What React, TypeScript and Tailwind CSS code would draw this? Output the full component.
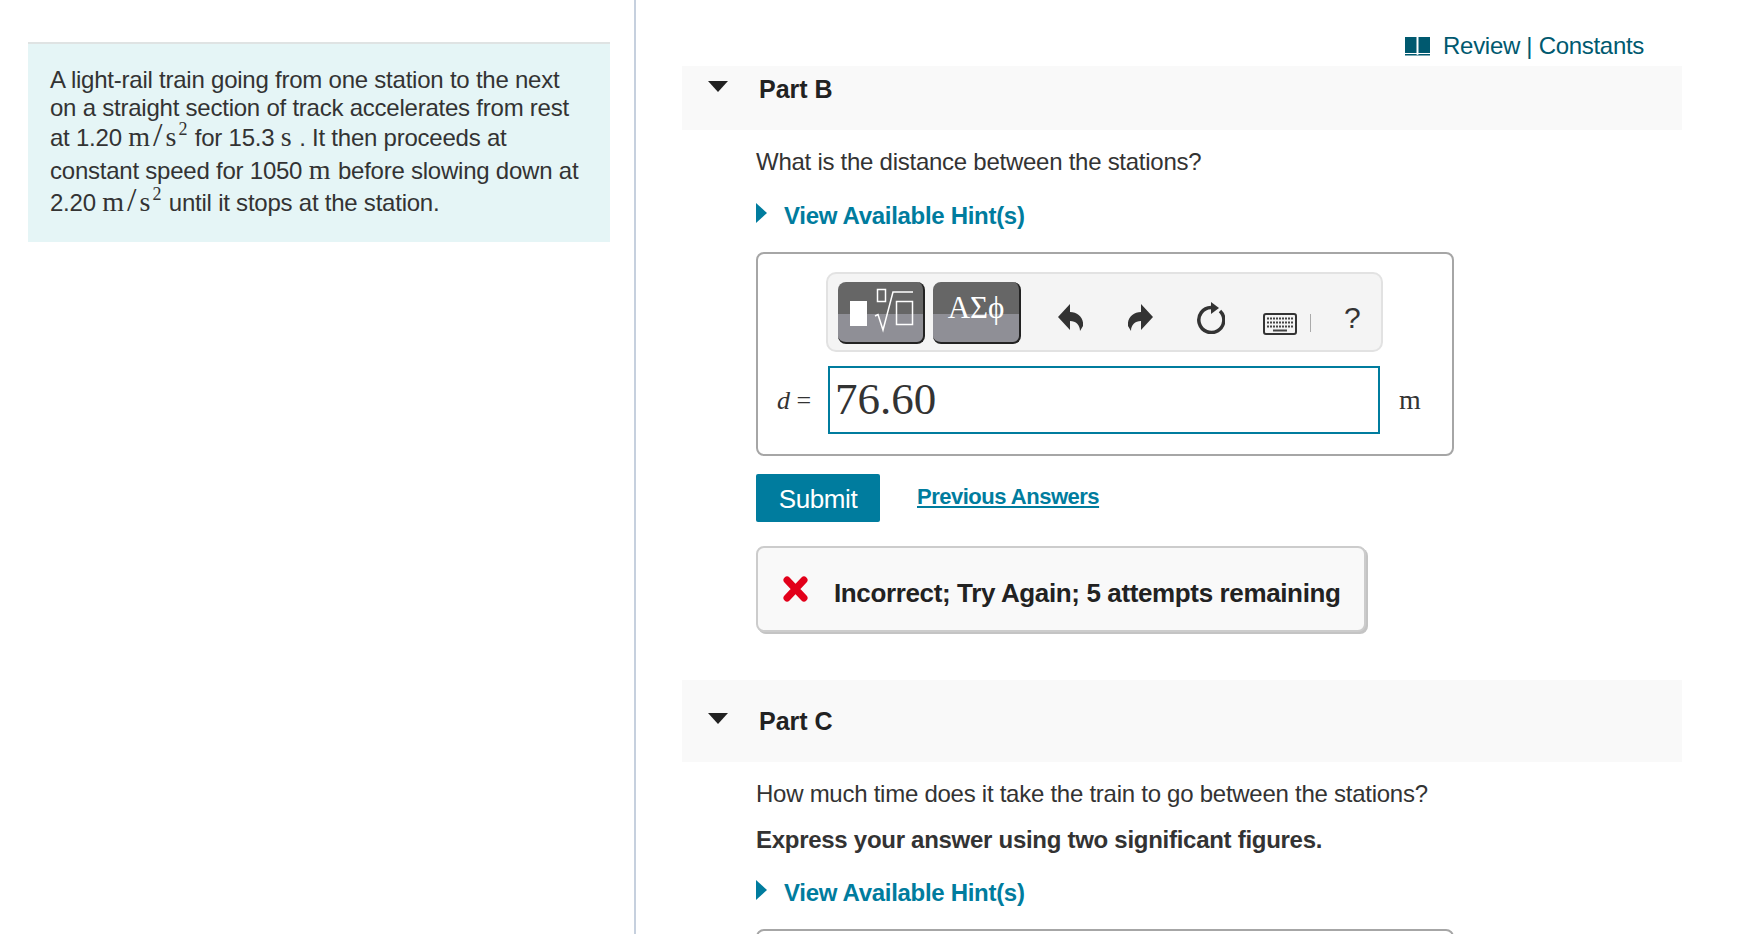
import React from "react";

const sans = "font-['Liberation_Sans',Arial,sans-serif]";
const math = "font-['Liberation_Serif','Times_New_Roman',serif]";
const toolBtn =
  "rounded-[8px] border-r-2 border-b-2 border-[#222] bg-[linear-gradient(#666_0,#666_54%,#8f8f96_54%,#8f8f96_100%)]";

function Unit({ children }: { children: React.ReactNode }) {
  return <span className={`${math} text-[28px] leading-[0] tracking-[1px]`}>{children}</span>;
}

function PerSquare() {
  return (
    <Unit>
      m<span className="mx-[2px] text-[34px] leading-[0] font-light">/</span>s
      <sup className="relative -top-[11px] ml-[1px] align-baseline text-[18px] leading-[0]">2</sup>
    </Unit>
  );
}

function DownCaret() {
  return (
    <svg width="20" height="12" viewBox="0 0 20 12" className="shrink-0">
      <path d="M0 1h20L10 12z" fill="#222" />
    </svg>
  );
}

function Hint() {
  return (
    <div className="flex items-center gap-[17px]">
      <svg width="11" height="20" viewBox="0 0 11 20" className="-mt-[6px] shrink-0">
        <path d="M0 0l11 10L0 20z" fill="#007c9e" />
      </svg>
      <a className="text-[24px] leading-[30px] font-bold tracking-[-0.3px] text-[#007c9e]">View Available Hint(s)</a>
    </div>
  );
}

function PartHeader({ name, height }: { name: string; height: string }) {
  return (
    <div className={`flex items-start gap-[31px] bg-[#f9f9f9] pl-[26px] ${height}`}>
      <div className="mt-[14px]">
        <DownCaret />
      </div>
      <h2 className="mt-[7px] text-[25px] leading-[32px] font-bold text-[#222]">{name}</h2>
    </div>
  );
}

function Toolbar() {
  return (
    <div className="ml-[68px] flex h-[80px] w-[557px] items-start rounded-[10px] border-2 border-[#e2e2e2] bg-[#f4f4f4] pl-[10px]">
      <button className={`mt-[8px] h-[62px] w-[87px] ${toolBtn}`}>
        <svg width="85" height="60" viewBox="0 0 85 60" className="block">
          <rect x="12" y="19" width="17" height="25" fill="#fff" />
          <rect x="39.500" y="7.500" width="8" height="12" fill="none" stroke="#fff" strokeWidth="1.5" />
          <path d="M37 34l3-1.500 5 15.500 10-38h20" fill="none" stroke="#fff" strokeWidth="1.5" />
          <rect x="58.500" y="19.500" width="16" height="23" fill="none" stroke="#fff" strokeWidth="1.5" />
        </svg>
      </button>
      <button className={`mt-[8px] ml-[8px] h-[62px] w-[88px] pb-[10px] text-[31px] leading-none text-white ${toolBtn} ${math}`}>
        ΑΣϕ
      </button>
      <svg width="25" height="27" viewBox="0 0 25 27" className="mt-[30px] ml-[37px]" fill="#333">
        <path d="M0 13L12 0v8c8 0 14 6 13 14l-3 5c0-6-4-10-10-10v9z" />
      </svg>
      <svg width="25" height="27" viewBox="0 0 25 27" className="mt-[30px] ml-[45px]" fill="#333">
        <path d="M25 13L13 0v8C5 8-1 14 0 22l3 5c0-6 4-10 10-10v9z" />
      </svg>
      <svg width="28" height="32" viewBox="0 0 28 32" className="mt-[28px] ml-[44px]" fill="none">
        <path d="M14 5.500A12.500 12.500 0 1 0 23 9" stroke="#333" strokeWidth="3.5" />
        <path d="M14 0l8 6-8 6z" fill="#333" />
      </svg>
      <svg width="34" height="22" viewBox="0 0 34 22" className="mt-[39px] ml-[38px]">
        <rect x="1" y="1" width="32" height="20" rx="2" fill="#f4f4f4" stroke="#333" strokeWidth="2" />
        <path d="M4 5.500h26M4 9.500h26M4 13.500h26" stroke="#444" strokeWidth="2" strokeDasharray="2 1" />
        <path d="M10 17.500h14" stroke="#444" strokeWidth="2" />
      </svg>
      <div className="mt-[40px] ml-[13px] h-[18px] w-px bg-[#aaa]" />
      <span className="mt-[26px] ml-[33px] text-[30px] leading-[36px] tracking-[-1px] text-[#333]">?</span>
    </div>
  );
}

function AnswerBox() {
  return (
    <div className="mt-[21px] h-[204px] w-[698px] rounded-[8px] border-2 border-[#a6a6a6] pt-[18px]">
      <Toolbar />
      <div className="mt-[14px] flex items-center">
        <span className={`ml-[19px] w-[51px] text-[26px] text-[#333] ${math}`}>
          <i>d</i> =
        </span>
        <div className={`flex h-[68px] w-[552px] items-center border-2 border-[#007c9e] pl-[5px] text-[45px] text-[#333] ${math}`}>
          76.60
        </div>
        <span className={`ml-[19px] text-[28px] text-[#333] ${math}`}>m</span>
      </div>
    </div>
  );
}

function Feedback() {
  return (
    <div className="mt-[24px] flex h-[86px] w-[610px] items-center rounded-[8px] border-2 border-[#ccc] bg-[#f9f9f9] pl-[25px] shadow-[2px_2px_0_#c4c4c4]">
      <svg width="25" height="26" viewBox="0 0 25 26" className="shrink-0">
        <path d="M4 4l17 18M21 4L4 22" stroke="#e2001a" strokeWidth="7" strokeLinecap="round" />
      </svg>
      <span className="mt-[8px] ml-[26px] text-[26px] font-bold tracking-[-0.37px] text-[#222]">
        Incorrect; Try Again; 5 attempts remaining
      </span>
    </div>
  );
}

export default function App() {
  return (
    <div className={`flex h-[934px] overflow-hidden bg-white ${sans} text-[#333]`}>
      <aside className="h-full w-[636px] shrink-0 border-r-2 border-[#c6d0de] pt-[42px] pl-[28px]">
        <div className="h-[200px] w-[582px] border-t-2 border-[#dfe3e3] bg-[#e5f5f6] px-[22px] pt-[22px] text-[24px] leading-[28px] tracking-[-0.23px] text-[#333]">
          <p>A light-rail train going from one station to the next</p>
          <p>on a straight section of track accelerates from rest</p>
          <p className="mt-[2px]">
            at 1.20 <PerSquare /> for 15.3 <Unit>s</Unit> . It then proceeds at
          </p>
          <p className="mt-[5px]">
            constant speed for 1050 <Unit>m</Unit> before slowing down at
          </p>
          <p className="mt-[4px]">
            2.20 <PerSquare /> until it stops at the station.
          </p>
        </div>
      </aside>

      <main className="min-w-0 flex-1 pl-[46px]">
        <div className="flex h-[66px] w-[1000px] justify-end pt-[31px] pr-[38px]">
          <div className="flex h-[30px] items-center gap-[13px] text-[24px] tracking-[-0.3px] text-[#00596f]">
            <svg width="25" height="19" viewBox="0 0 25 19">
              <path d="M0 0h11.500v16H0zM13.500 0H25v16H13.500zM0 17h11l1.500 1 1.500-1h11v1.500H0z" fill="#00596f" />
            </svg>
            <span>Review | Constants</span>
          </div>
        </div>

        <PartHeader name="Part B" height="h-[64px] w-[1000px]" />

        <div className="pl-[74px]">
          <p className="mt-[17px] text-[24px] leading-[29px] tracking-[-0.26px]">What is the distance between the stations?</p>
          <div className="mt-[25px]">
            <Hint />
          </div>
          <AnswerBox />
          <div className="mt-[18px] flex items-start">
            <button className="h-[48px] w-[124px] rounded-[2px] bg-[#007c9e] pt-[3px] text-[26px] tracking-[-0.4px] text-white">Submit</button>
            <a className="mt-[6px] ml-[37px] text-[22px] font-bold tracking-[-0.49px] text-[#007c9e] underline">Previous Answers</a>
          </div>
          <Feedback />
        </div>

        <div className="mt-[48px]">
          <PartHeader name="Part C" height="h-[82px] w-[1000px] pt-[18px]" />
        </div>

        <div className="pl-[74px]">
          <p className="mt-[17px] text-[24px] leading-[29px] tracking-[-0.26px]">How much time does it take the train to go between the stations?</p>
          <p className="mt-[17px] text-[24px] leading-[29px] font-bold tracking-[-0.28px]">Express your answer using two significant figures.</p>
          <div className="mt-[24px]">
            <Hint />
          </div>
          <div className="mt-[21px] h-[60px] w-[698px] rounded-[8px] border-2 border-[#a6a6a6]" />
        </div>
      </main>
    </div>
  );
}
